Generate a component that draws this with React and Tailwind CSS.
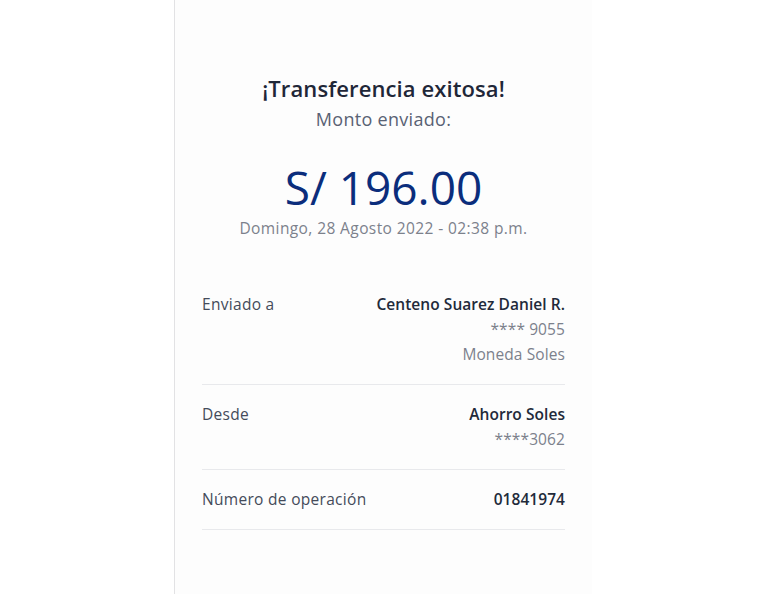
import React from 'react';

const Row = ({ label, value, extra = [] }) => (
    <div className="flex justify-between py-[17px] border-b border-[#e8e9ec]">
        <span className="text-[#444b5a] tracking-[0.3px]">{label}</span>
        <div className="flex flex-col items-end">
            <span className="font-semibold text-[#222a3a] tracking-[0.05px]">{value}</span>
            {extra.map((line) => (
                <span key={line} className="text-[#7c818c] tracking-[0.1px]">{line}</span>
            ))}
        </div>
    </div>
);

const App = () => {
    return (
        <div className="flex h-[594px] w-[768px] bg-white" style={{ fontFamily: '"Open Sans", "Noto Sans", sans-serif' }}>
            <div className="w-[174px] shrink-0" />
            <div className="w-[418px] shrink-0 border-l border-[#e2e2e4] bg-[#fdfdfd] px-[27px] pt-[74px]">
                <div className="text-center">
                    <h1 className="text-[22px] leading-[28px] font-semibold text-[#1f2738] tracking-[0.1px]">¡Transferencia exitosa!</h1>
                    <p className="mt-[5px] text-[18px] leading-[24px] text-[#596274] tracking-[0.3px]">Monto enviado:</p>
                    <p className="mt-[28px] text-[46px] leading-[56px] text-[#0b2d7c]">S/ 196.00</p>
                    <p className="mt-px text-[15.5px] leading-[24px] text-[#7c818c] tracking-[0.4px]">Domingo, 28 Agosto 2022 - 02:38 p.m.</p>
                </div>
                <div className="mt-[35px] text-[15.5px] leading-[25px]">
                    <Row label="Enviado a" value="Centeno Suarez Daniel R." extra={['**** 9055', 'Moneda Soles']} />
                    <Row label="Desde" value="Ahorro Soles" extra={['****3062']} />
                    <Row label="Número de operación" value="01841974" />
                </div>
            </div>
            <div className="flex-1" />
        </div>
    );
};

export default App;
